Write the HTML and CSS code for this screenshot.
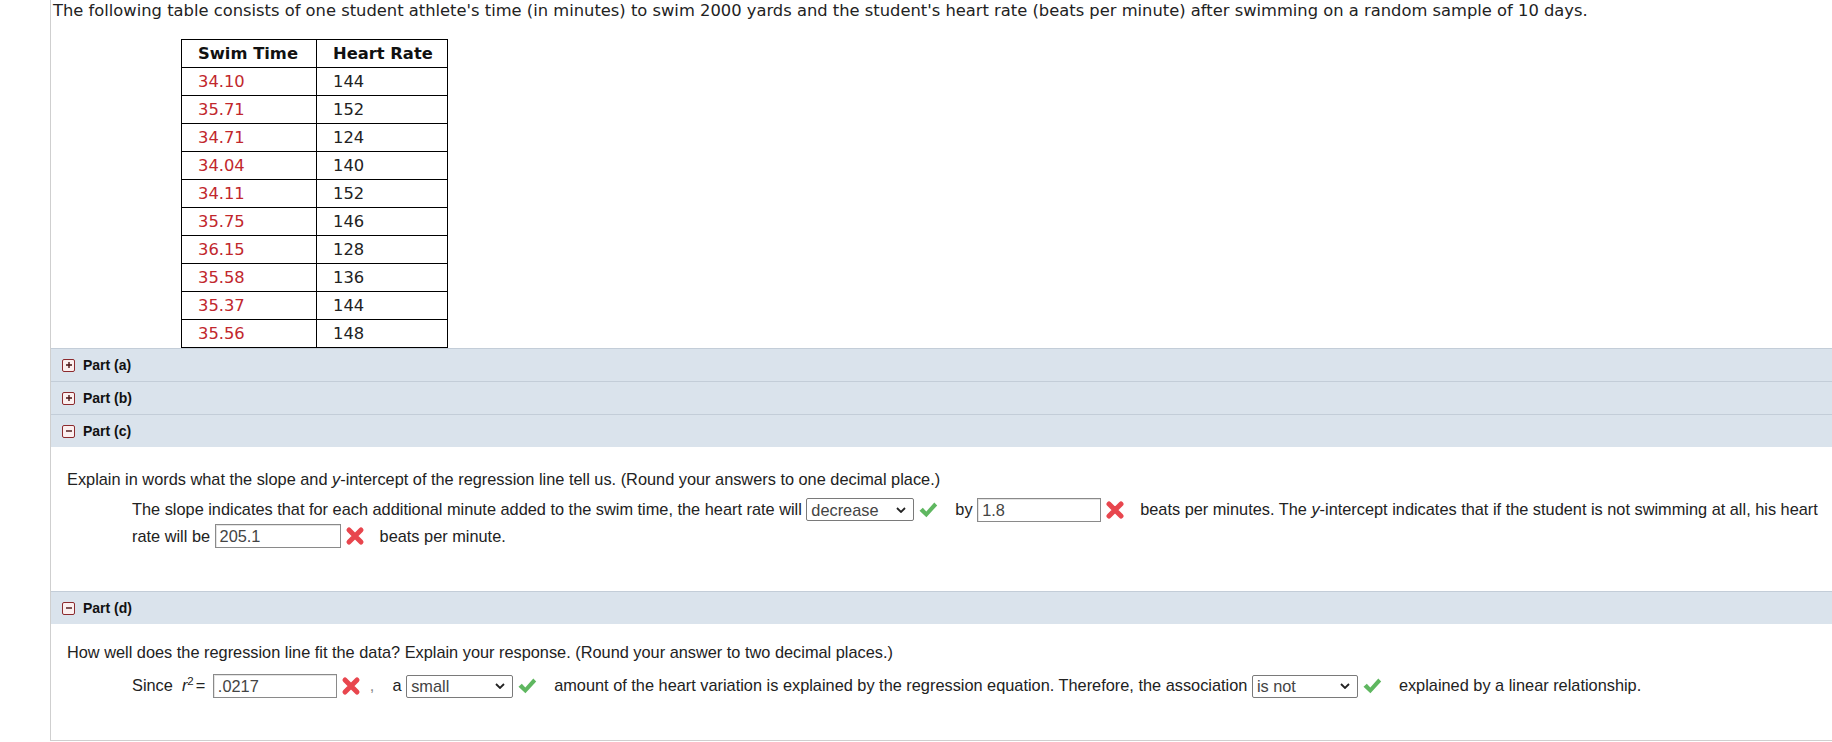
FILE: index.html
```html
<!DOCTYPE html>
<html>
<head>
<meta charset="utf-8">
<link rel="stylesheet" href="styles.css">
</head>
<body>
<div class="page">
  <p class="intro">The following table consists of one student athlete's time (in minutes) to swim 2000 yards and the student's heart rate (beats per minute) after swimming on a random sample of 10 days.</p>
  <table class="data">
    <thead>
      <tr><th>Swim Time</th><th>Heart Rate</th></tr>
    </thead>
    <tbody>
      <tr><td class="red">34.10</td><td>144</td></tr>
      <tr><td class="red">35.71</td><td>152</td></tr>
      <tr><td class="red">34.71</td><td>124</td></tr>
      <tr><td class="red">34.04</td><td>140</td></tr>
      <tr><td class="red">34.11</td><td>152</td></tr>
      <tr><td class="red">35.75</td><td>146</td></tr>
      <tr><td class="red">36.15</td><td>128</td></tr>
      <tr><td class="red">35.58</td><td>136</td></tr>
      <tr><td class="red">35.37</td><td>144</td></tr>
      <tr><td class="red">35.56</td><td>148</td></tr>
    </tbody>
  </table>

  <div class="part"><span class="toggle"><svg viewBox="0 0 10 10" width="10" height="10"><path d="M2 5H8M5 2V8" stroke="#4a1414" stroke-width="1.4"/></svg></span>Part (a)</div>
  <div class="part"><span class="toggle"><svg viewBox="0 0 10 10" width="10" height="10"><path d="M2 5H8M5 2V8" stroke="#4a1414" stroke-width="1.4"/></svg></span>Part (b)</div>
  <div class="part"><span class="toggle"><svg viewBox="0 0 10 10" width="10" height="10"><path d="M2 5H8" stroke="#4a1414" stroke-width="1.4"/></svg></span>Part (c)</div>
  <div class="part-body body-c">
    <p class="question">Explain in words what the slope and <i>y</i>-intercept of the regression line tell us. (Round your answers to one decimal place.)</p>
    <p class="answer">The slope indicates that for each additional minute added to the swim time, the heart rate will <span class="select w108"><span class="sel-text">decrease</span><svg class="chev" viewBox="0 0 10 6" width="10" height="6"><path d="M1 1L5 5L9 1" fill="none" stroke="#222" stroke-width="1.8"/></svg></span><span class="mark ok"><svg viewBox="0 0 20 20" width="20" height="20"><path d="M1.5 10.8L4.8 7.8L8.3 11.4L16.3 2.6L19.2 5.4L8.4 17.2Z" fill="#5fb760"/></svg></span>by <span class="input w124">1.8</span><span class="mark bad"><svg viewBox="0 0 20 20" width="20" height="20"><path d="M4 4L16 16M16 4L4 16" stroke="#e8464e" stroke-width="5" stroke-linecap="round"/></svg></span>beats per minutes. The <i>y</i>-intercept indicates that if the student is not swimming at all, his heart rate will be <span class="input w126">205.1</span><span class="mark bad"><svg viewBox="0 0 20 20" width="20" height="20"><path d="M4 4L16 16M16 4L4 16" stroke="#e8464e" stroke-width="5" stroke-linecap="round"/></svg></span>beats per minute.</p>
  </div>

  <div class="part"><span class="toggle"><svg viewBox="0 0 10 10" width="10" height="10"><path d="M2 5H8" stroke="#4a1414" stroke-width="1.4"/></svg></span>Part (d)</div>
  <div class="part-body body-d">
    <p class="question">How well does the regression line fit the data? Explain your response. (Round your answer to two decimal places.)</p>
    <p class="answer">Since&nbsp; <i>r</i><sup>2</sup><span class="eq">=</span> <span class="input w124 gap-l">.0217</span><span class="mark bad tight"><svg viewBox="0 0 20 20" width="20" height="20"><path d="M4 4L16 16M16 4L4 16" stroke="#e8464e" stroke-width="5" stroke-linecap="round"/></svg></span><span class="comma">,</span>&nbsp;&nbsp;&nbsp; a <span class="select w107"><span class="sel-text">small</span><svg class="chev" viewBox="0 0 10 6" width="10" height="6"><path d="M1 1L5 5L9 1" fill="none" stroke="#222" stroke-width="1.8"/></svg></span><span class="mark ok"><svg viewBox="0 0 20 20" width="20" height="20"><path d="M1.5 10.8L4.8 7.8L8.3 11.4L16.3 2.6L19.2 5.4L8.4 17.2Z" fill="#5fb760"/></svg></span>amount of the heart variation is explained by the regression equation. Therefore, the association <span class="select w106"><span class="sel-text">is not</span><svg class="chev" viewBox="0 0 10 6" width="10" height="6"><path d="M1 1L5 5L9 1" fill="none" stroke="#222" stroke-width="1.8"/></svg></span><span class="mark ok"><svg viewBox="0 0 20 20" width="20" height="20"><path d="M1.5 10.8L4.8 7.8L8.3 11.4L16.3 2.6L19.2 5.4L8.4 17.2Z" fill="#5fb760"/></svg></span>explained by a linear relationship.</p>
  </div>
</div>
</body>
</html>
```

FILE: styles.css
```css
html, body {
  margin: 0;
  padding: 0;
  background: #fff;
}

.page {
  margin-left: 50px;
  border-left: 1px solid #cfcfcf;
  border-bottom: 1px solid #cfcfcf;
  color: #222;
}

.intro {
  margin: 0;
  padding: 1px 0 0 2px;
  font-family: "DejaVu Sans", Verdana, sans-serif;
  font-size: 16.33px;
  line-height: 20px;
  color: #222;
}

.data {
  margin: 18px 0 0 130px;
  border-collapse: collapse;
  table-layout: fixed;
  width: 267px;
  font-family: "DejaVu Sans", Verdana, sans-serif;
  font-size: 16.33px;
}

.data th,
.data td {
  border: 1px solid #000;
  padding: 0 0 0 16px;
  line-height: 27px;
  height: 27px;
  text-align: left;
  color: #222;
}

.data th:first-child,
.data td:first-child {
  width: 118px;
}

.data th {
  font-weight: bold;
  color: #111;
}

.data td.red {
  color: #c1272d;
}

.part {
  display: flex;
  align-items: center;
  height: 32px;
  border-top: 1px solid #c3cdd8;
  background: #dae3ec;
  padding-left: 11px;
  font-family: "Liberation Sans", Arial, sans-serif;
  font-weight: bold;
  font-size: 14px;
  color: #111;
}

.toggle {
  display: flex;
  align-items: center;
  justify-content: center;
  width: 11px;
  height: 11px;
  border: 1px solid #8c2a2e;
  border-radius: 2px;
  background: #fbefef;
  margin-right: 8px;
}

.part-body {
  padding: 0 10px 0 16px;
  font-family: "Liberation Sans", Arial, sans-serif;
  font-size: 16.33px;
  color: #222;
}

.body-c {
  padding-top: 22px;
  padding-bottom: 42px;
}

.body-d {
  padding-top: 18px;
  padding-bottom: 41px;
}

.question {
  margin: 0;
  line-height: 20px;
}

.answer {
  margin: 7px 0 0 0;
  padding-left: 65px;
  line-height: 26px;
}

.body-d .answer {
  margin-top: 11px;
  line-height: 25px;
}

.answer sup {
  font-size: 11.5px;
  line-height: 0;
}

.eq {
  margin-left: 2px;
}

.select,
.input {
  display: inline-flex;
  align-items: center;
  box-sizing: border-box;
  height: 24px;
  vertical-align: middle;
  border: 1px solid #7a7a7a;
  background: #fff;
  color: #444;
  font-size: 16.33px;
  padding: 0 4px;
  position: relative;
  top: -1px;
}

.select {
  border-radius: 2px;
  justify-content: space-between;
  padding-right: 7px;
  height: 23px;
}

.input {
  border-color: #8a8a8a;
  box-shadow: inset 1px 1px 0 #e4e4e4;
}

.input.gap-l {
  margin-left: 3px;
}

.w106 { width: 106px; }
.w107 { width: 107px; }
.w108 { width: 108px; }
.w124 { width: 124px; }
.w126 { width: 126px; }

.mark {
  display: inline-block;
  width: 20px;
  height: 20px;
  vertical-align: middle;
  position: relative;
  top: -1px;
}

.mark.ok {
  margin: 0 17px 0 4px;
}

.mark.bad {
  margin: 0 15px 0 4px;
}

.mark.bad.tight {
  margin-right: 9px;
}

.mark svg {
  display: block;
}

.comma {
  color: #888;
}
```
